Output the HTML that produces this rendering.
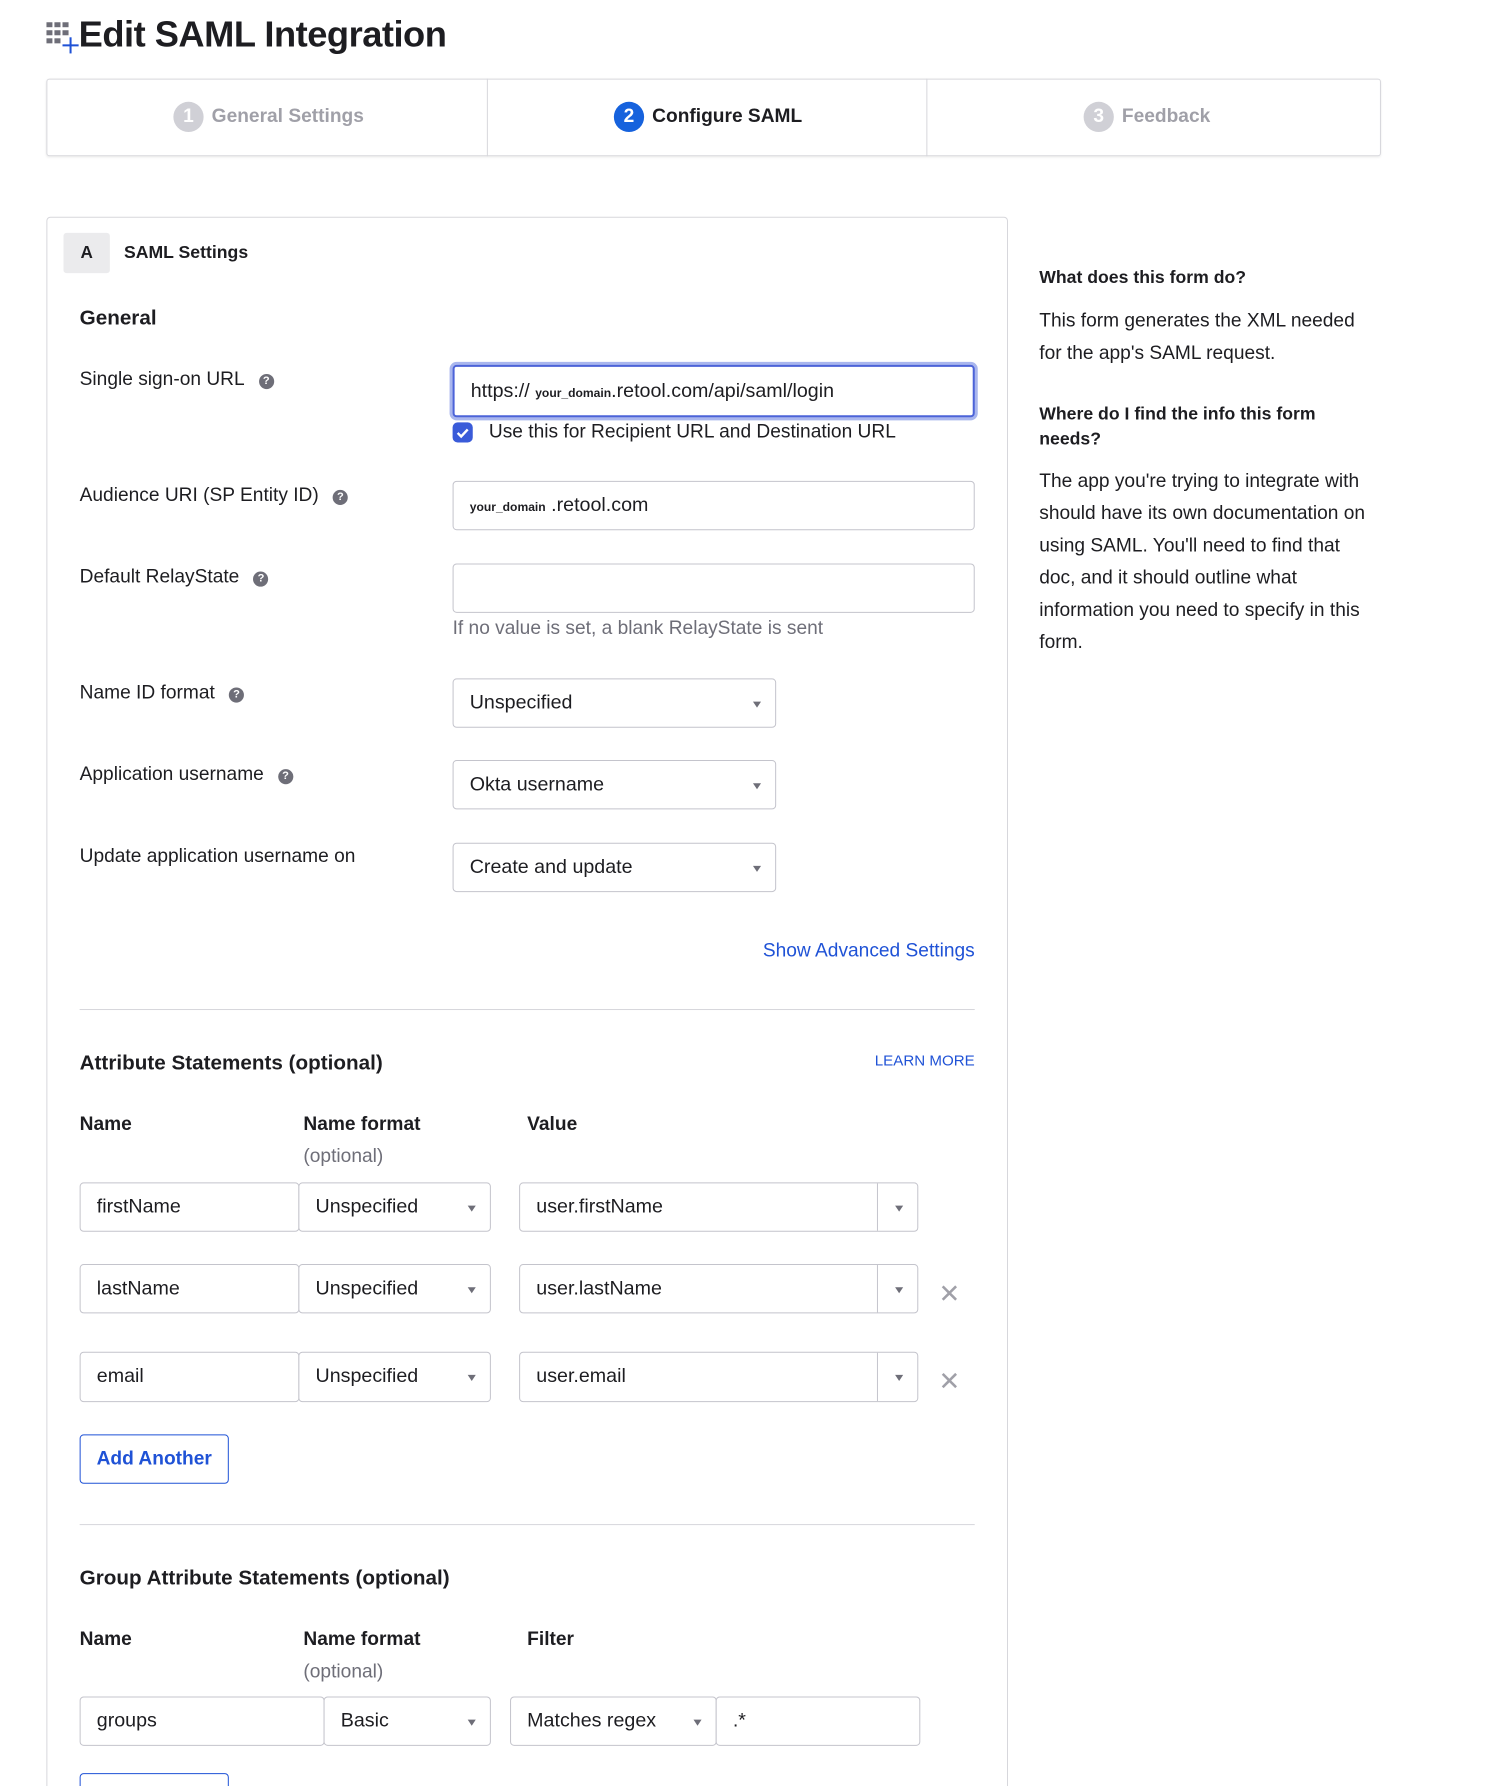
<!DOCTYPE html>
<html><head><meta charset="utf-8"><style>
*{box-sizing:border-box;margin:0;padding:0}
html,body{width:1504px;height:1786px;overflow:hidden}
body{background:#fff;font-family:"Liberation Sans",sans-serif;color:#1d1d21;position:relative}
#w{position:absolute;left:0;top:0;width:1504px;height:1786px;transform:scale(1.008);transform-origin:0 0}
.a{position:absolute}
.lbl{position:absolute;left:79px;font-size:19px;color:#1d1d21;line-height:22px}
.q{display:inline-block;width:15px;height:15px;border-radius:50%;background:#6e6e78;color:#fff;font-size:11px;font-weight:bold;text-align:center;line-height:15px;vertical-align:1px;margin-left:14px}
.in{position:absolute;border:1px solid #c4c4cc;border-radius:4px;background:#fff;font-size:19.5px;line-height:22px;padding:12px 16px;color:#1d1d21;white-space:nowrap}
.arr{position:absolute;right:14px;top:50%;margin-top:-2px;width:0;height:0;border-left:4px solid transparent;border-right:4px solid transparent;border-top:6px solid #6e6e78}
.hd{position:absolute;font-size:19px;font-weight:bold;color:#1d1d21}
.opt{position:absolute;font-size:19px;color:#6e6e78}
.x{position:absolute;font-size:26px;color:#a0a0a8;line-height:26px}
.btn{position:absolute;border:1px solid #1f52d6;border-radius:4px;color:#1f52d6;font-weight:bold;font-size:19px;text-align:center;line-height:47px}
.side{position:absolute;left:1031px;width:338px;font-size:19px;line-height:32px;color:#1d1d21}
</style></head><body><div id="w">
<svg class="a" style="left:46px;top:22px" width="34" height="32" viewBox="0 0 34 32">
<g fill="#6e6e78"><rect x="0" y="0" width="6" height="5"/><rect x="8" y="0" width="6" height="5"/><rect x="16" y="0" width="6" height="5"/><rect x="0" y="8" width="6" height="5"/><rect x="8" y="8" width="6" height="5"/><rect x="16" y="8" width="6" height="5"/><rect x="0" y="16" width="6" height="5"/><rect x="8" y="16" width="6" height="5"/></g>
<rect x="23" y="15" width="2" height="16" fill="#1f52d6"/><rect x="16" y="22" width="16" height="2" fill="#1f52d6"/></svg>
<div class="a" style="left:78px;top:13px;font-size:36px;font-weight:bold;letter-spacing:-0.5px">Edit SAML Integration</div>

<div class="a" style="left:46px;top:78px;width:1324px;height:77px;border:1px solid #d7d7dc;border-radius:3px;box-shadow:0 1px 2px rgba(0,0,0,.08)"></div>
<div class="a" style="left:483px;top:78px;width:1px;height:77px;background:#d7d7dc"></div>
<div class="a" style="left:919px;top:78px;width:1px;height:77px;background:#d7d7dc"></div>
<div class="a" style="left:172px;top:101px;font-size:19px;font-weight:bold;color:#a0a0a8;line-height:30px"><span style="display:inline-block;width:30px;height:30px;border-radius:50%;background:#d0d0d6;color:#fff;text-align:center;margin-right:8px">1</span>General Settings</div>
<div class="a" style="left:609px;top:101px;font-size:19px;font-weight:bold;color:#1d1d21;line-height:30px"><span style="display:inline-block;width:30px;height:30px;border-radius:50%;background:#1662dd;color:#fff;text-align:center;margin-right:8px">2</span>Configure SAML</div>
<div class="a" style="left:1075px;top:101px;font-size:19px;font-weight:bold;color:#a0a0a8;line-height:30px"><span style="display:inline-block;width:30px;height:30px;border-radius:50%;background:#d0d0d6;color:#fff;text-align:center;margin-right:8px">3</span>Feedback</div>

<div class="a" style="left:46px;top:215px;width:954px;height:1700px;border:1px solid #d7d7dc;border-radius:4px"></div>
<div class="a" style="left:63px;top:231px;width:46px;height:40px;background:#ebebed;border-radius:3px;text-align:center;line-height:40px;font-size:17px;font-weight:bold">A</div>
<div class="a" style="left:123px;top:240px;font-size:17.5px;font-weight:bold">SAML Settings</div>
<div class="a" style="left:79px;top:304px;font-size:20.5px;font-weight:bold">General</div>

<div class="lbl" style="top:366px">Single sign-on URL<span class="q">?</span></div>
<div class="in" style="left:449px;top:362px;width:518px;height:52px;border:2px solid #4c63d8;box-shadow:0 0 0 3px #a9b6ee;padding-top:13px">https:// <span style="font-size:12px;font-weight:bold">your_domain</span>.retool.com/api/saml/login</div>
<div class="a" style="left:449px;top:419px;width:20px;height:20px;border-radius:5px;background:#3a5bd9"><svg width="20" height="20"><path d="M5 10.5l3.5 3.5 6.5-7" stroke="#fff" stroke-width="2.4" fill="none"/></svg></div>
<div class="a" style="left:485px;top:418px;font-size:19px">Use this for Recipient URL and Destination URL</div>

<div class="lbl" style="top:481px">Audience URI (SP Entity ID)<span class="q">?</span></div>
<div class="in" style="left:449px;top:477px;width:518px;height:49px"><span style="font-size:12px;font-weight:bold">your_domain</span> .retool.com</div>

<div class="lbl" style="top:562px">Default RelayState<span class="q">?</span></div>
<div class="in" style="left:449px;top:559px;width:518px;height:49px"></div>
<div class="a" style="left:449px;top:613px;font-size:19px;color:#6e6e78">If no value is set, a blank RelayState is sent</div>

<div class="lbl" style="top:677px">Name ID format<span class="q">?</span></div>
<div class="in" style="left:449px;top:673px;width:321px;height:49px">Unspecified<i class="arr"></i></div>
<div class="lbl" style="top:758px">Application username<span class="q">?</span></div>
<div class="in" style="left:449px;top:754px;width:321px;height:49px">Okta username<i class="arr"></i></div>
<div class="lbl" style="top:839px">Update application username on</div>
<div class="in" style="left:449px;top:836px;width:321px;height:49px">Create and update<i class="arr"></i></div>

<div class="a" style="right:537px;top:933px;font-size:19px;color:#1f52d6">Show Advanced Settings</div>
<div class="a" style="left:79px;top:1001px;width:888px;height:1px;background:#d7d7dc"></div>

<div class="a" style="left:79px;top:1043px;font-size:20.5px;font-weight:bold">Attribute Statements (optional)</div>
<div class="a" style="right:537px;top:1044px;font-size:15px;color:#1f52d6">LEARN MORE</div>
<div class="hd" style="left:79px;top:1105px">Name</div><div class="hd" style="left:301px;top:1105px">Name format</div><div class="hd" style="left:523px;top:1105px">Value</div>
<div class="opt" style="left:301px;top:1137px">(optional)</div>

<div class="in" style="left:79px;top:1173px;width:218px;height:49px">firstName</div>
<div class="in" style="left:296px;top:1173px;width:191px;height:49px">Unspecified<i class="arr"></i></div>
<div class="in" style="left:515px;top:1173px;width:396px;height:49px">user.firstName<div class="a" style="left:354px;top:0;width:1px;height:47px;background:#c4c4cc"></div><i class="arr"></i></div>

<div class="in" style="left:79px;top:1254px;width:218px;height:49px">lastName</div>
<div class="in" style="left:296px;top:1254px;width:191px;height:49px">Unspecified<i class="arr"></i></div>
<div class="in" style="left:515px;top:1254px;width:396px;height:49px">user.lastName<div class="a" style="left:354px;top:0;width:1px;height:47px;background:#c4c4cc"></div><i class="arr"></i></div>
<div class="x" style="left:931px;top:1270px">✕</div>

<div class="in" style="left:79px;top:1341px;width:218px;height:50px">email</div>
<div class="in" style="left:296px;top:1341px;width:191px;height:50px">Unspecified<i class="arr"></i></div>
<div class="in" style="left:515px;top:1341px;width:396px;height:50px">user.email<div class="a" style="left:354px;top:0;width:1px;height:48px;background:#c4c4cc"></div><i class="arr"></i></div>
<div class="x" style="left:931px;top:1357px">✕</div>

<div class="btn" style="left:79px;top:1423px;width:148px;height:49px">Add Another</div>
<div class="a" style="left:79px;top:1512px;width:888px;height:1px;background:#d7d7dc"></div>

<div class="a" style="left:79px;top:1554px;font-size:20.5px;font-weight:bold">Group Attribute Statements (optional)</div>
<div class="hd" style="left:79px;top:1616px">Name</div><div class="hd" style="left:301px;top:1616px">Name format</div><div class="hd" style="left:523px;top:1616px">Filter</div>
<div class="opt" style="left:301px;top:1648px">(optional)</div>
<div class="in" style="left:79px;top:1683px;width:243px;height:49px">groups</div>
<div class="in" style="left:321px;top:1683px;width:166px;height:49px">Basic<i class="arr"></i></div>
<div class="in" style="left:506px;top:1683px;width:205px;height:49px">Matches regex<i class="arr"></i></div>
<div class="in" style="left:710px;top:1683px;width:203px;height:49px">.*</div>
<div class="btn" style="left:79px;top:1759px;width:148px;height:49px"></div>

<div class="side" style="top:262px;font-size:17.5px;font-weight:bold;line-height:26px">What does this form do?</div>
<div class="side" style="top:303px">This form generates the XML needed for the app's SAML request.</div>
<div class="side" style="top:398px;font-size:17.5px;font-weight:bold;line-height:25px;width:300px">Where do I find the info this form needs?</div>
<div class="side" style="top:462px">The app you're trying to integrate with should have its own documentation on using SAML. You'll need to find that doc, and it should outline what information you need to specify in this form.</div>
</div></body></html>
